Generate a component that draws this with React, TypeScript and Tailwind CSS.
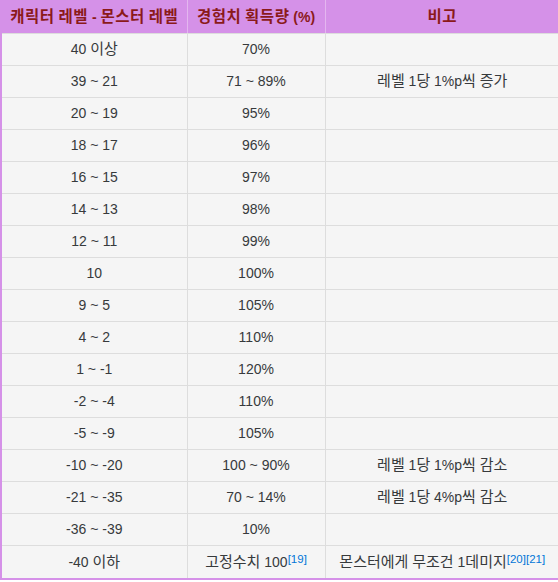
const rows: [string, string, string][] = [
  ["40 이상", "70%", ""],
  ["39 ~ 21", "71 ~ 89%", "레벨 1당 1%p씩 증가"],
  ["20 ~ 19", "95%", ""],
  ["18 ~ 17", "96%", ""],
  ["16 ~ 15", "97%", ""],
  ["14 ~ 13", "98%", ""],
  ["12 ~ 11", "99%", ""],
  ["10", "100%", ""],
  ["9 ~ 5", "105%", ""],
  ["4 ~ 2", "110%", ""],
  ["1 ~ -1", "120%", ""],
  ["-2 ~ -4", "110%", ""],
  ["-5 ~ -9", "105%", ""],
  ["-10 ~ -20", "100 ~ 90%", "레벨 1당 1%p씩 감소"],
  ["-21 ~ -35", "70 ~ 14%", "레벨 1당 4%p씩 감소"],
  ["-36 ~ -39", "10%", ""],
];

const cell = "h-[32px] border border-[#dddddd] px-2 text-center align-middle";
const head = "h-[33px] border-x border-x-[#e4b6ef] border-b border-b-[#dddddd] px-2 text-center";

// hangul renders a bit wider in the original font, so bump those runs
function K({ text, big }: { text: string; big?: boolean }) {
  return (
    <>
      {text.split(/([가-힣]+)/).map((part, i) =>
        /[가-힣]/.test(part) ? (
          <span key={i} className={big ? "text-[15.5px] tracking-[0.5px]" : "text-[15px]"}>
            {part}
          </span>
        ) : (
          part
        ),
      )}
    </>
  );
}

function Ref({ n }: { n: number }) {
  return <sup className="relative -top-[4px] text-[11.5px] text-[#0275d8]">[{n}]</sup>;
}

export default function App() {
  return (
    <div
      className="h-[582px] w-[558px] overflow-hidden bg-white text-[14px] text-[#373a3c]"
      style={{ fontFamily: '"Liberation Sans", "Noto Sans CJK KR", sans-serif' }}
    >
      <table className="w-[560px] table-fixed border-collapse border-b-2 border-l-2 border-b-[#d591e8] border-l-[#d591e8]">
        <colgroup>
          <col className="w-[186px]" />
          <col className="w-[138px]" />
          <col />
        </colgroup>
        <thead>
          <tr className="bg-[#d591e8] font-bold text-[#8b1a1a]">
            <th className={head}>
              <K text="캐릭터 레벨 - 몬스터 레벨" big />
            </th>
            <th className={head}>
              <K text="경험치 획득량 (%)" big />
            </th>
            <th className={head}>
              <K text="비고" big />
            </th>
          </tr>
        </thead>
        <tbody className="bg-[#f5f5f5]">
          {rows.map(([a, b, c]) => (
            <tr key={a}>
              <td className={cell}>
                <K text={a} />
              </td>
              <td className={cell}>{b}</td>
              <td className={cell}>
                <K text={c} />
              </td>
            </tr>
          ))}
          <tr>
            <td className="h-[34px] border-x border-t border-[#dddddd] px-2 text-center">
              <K text="-40 이하" />
            </td>
            <td className="h-[34px] border-x border-t border-[#dddddd] px-2 text-center">
              <K text="고정수치 100" />
              <Ref n={19} />
            </td>
            <td className="h-[34px] border-x border-t border-[#dddddd] px-2 text-center">
              <K text="몬스터에게 무조건 1데미지" />
              <Ref n={20} />
              <Ref n={21} />
            </td>
          </tr>
        </tbody>
      </table>
    </div>
  );
}
